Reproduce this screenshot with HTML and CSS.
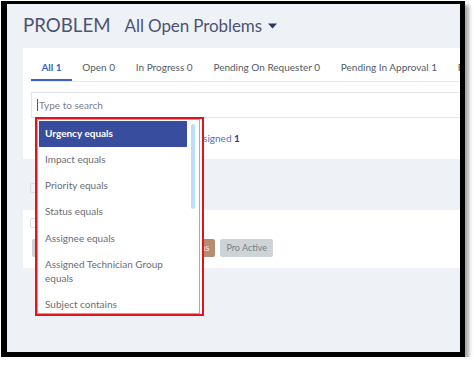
FILE: index.html
```html
<!DOCTYPE html>
<html>
<head>
<meta charset="utf-8">
<link rel="stylesheet" href="styles.css">
</head>
<body>
<div class="frame">
  <div class="screen">
    <header class="title">
      <span class="module">PROBLEM</span>
      <span class="view">All Open Problems</span>
      <svg class="caret" width="9" height="6" viewBox="0 0 9 6"><path d="M0 0.5 H9 L4.5 5.5 Z" fill="#28396c"/></svg>
    </header>

    <section class="card card-main">
      <nav class="tabs">
        <span class="tab active">All 1</span>
        <span class="tab">Open 0</span>
        <span class="tab">In Progress 0</span>
        <span class="tab">Pending On Requester 0</span>
        <span class="tab">Pending In Approval 1</span>
        <span class="tab">Resolved 0</span>
      </nav>
      <div class="search">
        <span class="cursor"></span>
        <span class="placeholder">Type to search</span>
      </div>
      <div class="filters">
        <span class="filter">Unassigned <b>1</b></span>
      </div>
    </section>

    <div class="list-head"><span class="check"></span></div>

    <section class="card card-item">
      <span class="check"></span>
      <div class="tags">
        <span class="tag tag-grey">Low</span>
        <span class="tag tag-brown">Hardware Problems</span>
        <span class="tag tag-grey">Pro Active</span>
      </div>
    </section>

    <div class="dropdown">
      <div class="listbox">
        <ul class="options">
          <li class="option selected">Urgency equals</li>
          <li class="option">Impact equals</li>
          <li class="option">Priority equals</li>
          <li class="option">Status equals</li>
          <li class="option">Assignee equals</li>
          <li class="option">Assigned Technician Group equals</li>
          <li class="option">Subject contains</li>
        </ul>
        <div class="scrollbar"><span class="thumb"></span></div>
      </div>
    </div>
  </div>
</div>
</body>
</html>
```

FILE: styles.css
```css
* { box-sizing: border-box; }

body {
  margin: 0;
  background: #ffffff;
  font-family: Lato, "Open Sans", sans-serif;
}

.frame {
  margin: 1px 0 0 1px;
  width: 464px;
  height: 356px;
  border-style: solid;
  border-color: #000;
  border-width: 3px 5px 5px 6px;
  box-shadow: 4px 4px 4px rgba(0, 0, 0, 0.35);
}

.screen {
  position: relative;
  height: 100%;
  background: #eef2f6;
  overflow: hidden;
  padding-left: 16px;
}

.title {
  display: flex;
  align-items: baseline;
  padding-top: 9px;
  height: 33px;
  color: #4b5275;
  line-height: 24px;
  white-space: nowrap;
}

.module {
  font-size: 18.7px;
  margin-right: 14px;
}

.view {
  font-size: 17px;
  letter-spacing: -0.1px;
}

.caret { margin-left: 6px; align-self: center; margin-top: 1px; }

.card {
  background: #ffffff;
  width: 600px;
}

.card-main {
  margin-top: 11px;
  padding: 0 0 14px 8px;
}

.tabs {
  display: flex;
  border-bottom: 1px solid #e6e9ed;
  white-space: nowrap;
}

.tab {
  padding: 13px 10.4px 6px;
  font-size: 10px;
  line-height: 12px;
  color: #555b66;
  border-bottom: 2px solid transparent;
}

.tab.active {
  color: #3b62c2;
  font-weight: 700;
  border-bottom-color: #3b62c2;
}

.search {
  display: flex;
  align-items: center;
  margin-top: 10px;
  height: 26px;
  border: 1px solid #e2e5e9;
  padding-left: 5px;
}

.cursor {
  width: 1px;
  height: 12px;
  background: #555;
  margin-right: 1px;
}

.placeholder {
  font-size: 10px;
  color: #7b8089;
}

.filters {
  padding: 13px 0 0 150px;
  line-height: 14px;
  font-size: 10px;
}

.filter { color: #4a72c8; }
.filter b { color: #2c3f7e; }

.list-head {
  height: 51px;
  padding: 24px 0 0 7px;
}

.check {
  display: block;
  width: 9px;
  height: 10px;
  border: 1px solid #d9dee4;
  border-radius: 2px;
}

.card-item {
  height: 58px;
  padding: 8px 0 0 7px;
}

.tags {
  display: flex;
  gap: 5px;
  margin-top: 11px;
  padding-left: 2px;
}

.tag {
  height: 18px;
  line-height: 18px;
  padding: 0 6px;
  font-size: 9px;
  border-radius: 2px;
  white-space: nowrap;
}

.tag-grey {
  background: #ced3d6;
  color: #7a7f84;
}

.tag-brown {
  width: 150px;
  text-align: right;
  background: #b98b73;
  color: #f4ece6;
}

.dropdown {
  position: absolute;
  left: 28px;
  top: 113px;
  width: 169px;
  height: 199px;
  border: 2px solid #e3141c;
  padding-right: 2px;
  background: #ffffff;
}

.listbox {
  display: flex;
  height: 100%;
  border: 1px solid #a3acbf;
  padding: 1px 0 0 1px;
  overflow: hidden;
}

.options {
  flex: 1;
  margin: 0;
  padding: 0;
  list-style: none;
}

.option {
  padding: 4.5px 10px 7.5px 6px;
  font-size: 10px;
  line-height: 14.25px;
  color: #6a6e77;
}

.option.selected {
  background: #394d9f;
  color: #ffffff;
  font-weight: 700;
}

.scrollbar {
  width: 12px;
  padding: 3px 0 0 4px;
}

.thumb {
  display: block;
  width: 4px;
  height: 85px;
  border-radius: 2px;
  background: #bcdff8;
}
```
